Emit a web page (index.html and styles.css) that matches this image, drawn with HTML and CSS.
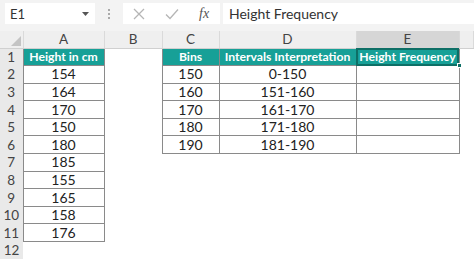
FILE: index.html
```html
<!DOCTYPE html>
<html lang="en">
<head>
  <meta charset="UTF-8">
  <title>Height Frequency</title>
  <link rel="stylesheet" href="styles.css">
</head>
<body>
<div class="bar">
  <div class="namebox">
    <span>E1</span>
    <svg class="drop" width="7" height="4" viewBox="0 0 7 4"><path d="M0 0h7L3.5 4z" fill="#555"/></svg>
  </div>
  <div class="dots"><i></i><i></i><i></i></div>
  <div class="btns">
    <svg width="12" height="12" viewBox="0 0 12 12"><path d="M1 1l10 10M11 1L1 11" stroke="#b5b5b5" stroke-width="1.3" fill="none"/></svg>
    <svg width="14" height="12" viewBox="0 0 14 12"><path d="M1 6.5l4 4L13 1.5" stroke="#b5b5b5" stroke-width="1.3" fill="none"/></svg>
    <span class="fx">fx</span>
  </div>
  <div class="formula">Height Frequency</div>
</div>

<table class="sheet">
  <colgroup>
    <col class="c-row">
    <col class="c-a">
    <col class="c-b">
    <col class="c-c">
    <col class="c-d">
    <col class="c-e">
    <col>
  </colgroup>
  <tr class="heads">
    <th class="corner"><span class="tri"></span></th>
    <th>A</th><th>B</th><th>C</th><th>D</th><th class="sel">E</th><th></th>
  </tr>
  <tr>
    <th>1</th>
    <td class="box hd">Height in cm</td><td></td>
    <td class="box hd">Bins</td><td class="box hd">Intervals Interpretation</td><td class="box hd active">Height Frequency<span class="handle"></span></td><td></td>
  </tr>
  <tr><th>2</th><td class="box">154</td><td></td><td class="box">150</td><td class="box">0-150</td><td class="box"></td><td></td></tr>
  <tr><th>3</th><td class="box">164</td><td></td><td class="box">160</td><td class="box">151-160</td><td class="box"></td><td></td></tr>
  <tr><th>4</th><td class="box">170</td><td></td><td class="box">170</td><td class="box">161-170</td><td class="box"></td><td></td></tr>
  <tr><th>5</th><td class="box">150</td><td></td><td class="box">180</td><td class="box">171-180</td><td class="box"></td><td></td></tr>
  <tr><th>6</th><td class="box">180</td><td></td><td class="box">190</td><td class="box">181-190</td><td class="box"></td><td></td></tr>
  <tr><th>7</th><td class="box">185</td><td></td><td></td><td></td><td></td><td></td></tr>
  <tr><th>8</th><td class="box">155</td><td></td><td></td><td></td><td></td><td></td></tr>
  <tr><th>9</th><td class="box">165</td><td></td><td></td><td></td><td></td><td></td></tr>
  <tr><th>10</th><td class="box">158</td><td></td><td></td><td></td><td></td><td></td></tr>
  <tr><th>11</th><td class="box">176</td><td></td><td></td><td></td><td></td><td></td></tr>
  <tr><th>12</th><td></td><td></td><td></td><td></td><td></td><td></td></tr>
</table>
</body>
</html>
```

FILE: styles.css
```css
* {
  margin: 0;
  padding: 0;
  box-sizing: border-box;
}

body {
  width: 474px;
  height: 259px;
  overflow: hidden;
  background: #fff;
  font-family: Lato, "Open Sans", sans-serif;
  color: #222;
}

/* formula bar */
.bar {
  height: 31px;
  padding: 3px 0 7px 5px;
  background: #f3f3f3;
  display: flex;
  align-items: stretch;
}

.namebox {
  width: 90px;
  background: #fff;
  display: flex;
  align-items: center;
  justify-content: space-between;
  padding: 0 6px 0 5px;
  font-size: 13px;
  color: #333;
}

.dots {
  width: 28px;
  display: flex;
  flex-direction: column;
  align-items: center;
  justify-content: center;
  gap: 2px;
}

.dots i {
  width: 2px;
  height: 2px;
  background: #aaa;
}

.btns {
  width: 97px;
  background: #fff;
  display: flex;
  align-items: center;
  padding-left: 10px;
  gap: 20px;
}

.fx {
  font-family: "Liberation Serif", serif;
  font-style: italic;
  font-size: 14px;
  color: #555;
}

.formula {
  flex: 1;
  margin-left: 3px;
  background: #fff;
  padding-left: 6px;
  font-size: 14px;
  line-height: 21px;
  color: #333;
}

/* sheet */
.sheet {
  width: 474px;
  border-collapse: collapse;
  table-layout: fixed;
  font-size: 14px;
}

.c-row { width: 23px; }
.c-a { width: 81px; }
.c-b { width: 58px; }
.c-c { width: 57px; }
.c-d { width: 137px; }
.c-e { width: 103px; }

.sheet tr {
  height: 17.6px;
}

.sheet tr.heads {
  height: 17px;
}

.sheet th {
  background: #e9e9e9;
  font-weight: normal;
  color: #444;
  font-size: 13.5px;
  line-height: 16px;
  text-align: center;
  padding: 0;
}

.heads th {
  background: #efefef;
  border-right: 1px solid #dadada;
  border-bottom: 1px solid #d0d0d0;
}

.heads th.sel {
  background: #d6d6d6;
}

.corner {
  position: relative;
}

.tri {
  position: absolute;
  right: 2px;
  bottom: 2px;
  width: 0;
  height: 0;
  border-left: 10px solid transparent;
  border-bottom: 10px solid #c4c4c4;
}

.sheet td {
  text-align: center;
  padding: 0;
  line-height: 16px;
  white-space: nowrap;
  overflow: hidden;
}

.sheet td.box {
  border: 1px solid #8a8a8a;
}

.sheet td.hd {
  background: #17a097;
  color: #fff;
  font-weight: bold;
  font-size: 12.2px;
}

.sheet td.active {
  position: relative;
  outline: 2px solid #0e6f66;
  outline-offset: -2px;
  overflow: visible;
}

.handle {
  position: absolute;
  right: -3px;
  bottom: -3px;
  width: 5px;
  height: 5px;
  background: #0e6f66;
  border: 1px solid #fff;
}
```
